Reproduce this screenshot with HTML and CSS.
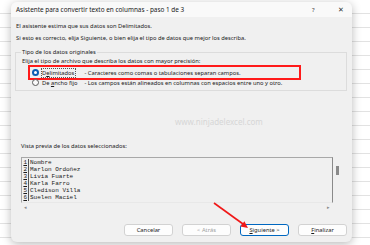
FILE: index.html
```html
<!DOCTYPE html>
<html lang="es">
<head>
    <meta charset="UTF-8">
    <title>Asistente para convertir texto en columnas</title>
    <link rel="stylesheet" href="styles.css">
</head>
<body>
    <div class="sheet">
        <div class="dialog">
            <div class="titlebar">
                <span class="title">Asistente para convertir texto en columnas - paso 1 de 3</span>
                <span class="tb-help">?</span>
                <span class="tb-close">✕</span>
            </div>

            <div class="dlg-body">
                <p class="line">El asistente estima que sus datos son Delimitados.</p>
                <p class="line">Si esto es correcto, elija Siguiente, o bien elija el tipo de datos que mejor los describa.</p>

                <fieldset class="group">
                    <legend>Tipo de los datos originales</legend>
                    <p class="hint">Elija el tipo de archivo que describa los datos con mayor precisión:</p>
                    <div class="opt opt-marked">
                        <span class="radio checked"></span>
                        <span class="opt-name"><span class="lbl focus">D<u>e</u>limitados</span></span>
                        <span class="opt-desc">- Caracteres como comas o tabulaciones separan campos.</span>
                    </div>
                    <div class="opt">
                        <span class="radio"></span>
                        <span class="opt-name"><span class="lbl">De <u>a</u>ncho fijo</span></span>
                        <span class="opt-desc">- Los campos están alineados en columnas con espacios entre uno y otro.</span>
                    </div>
                </fieldset>

                <div class="watermark">www.ninjadelexcel.com</div>

                <p class="line preview-label">Vista previa de los datos seleccionados:</p>

                <div class="preview-wrap">
                    <div class="preview" id="preview">
                        <!-- filas generadas abajo -->
                    </div>
                    <div class="vscroll"><span class="thumb"></span></div>
                </div>
                <div class="hscroll">
                    <span class="arr">&#9666;</span>
                    <span class="arr">&#9656;</span>
                </div>

                <div class="buttons">
                    <span class="btn">Cancelar</span>
                    <span class="btn disabled">&lt; Atrás</span>
                    <span class="btn default"><u>S</u>iguiente &gt;</span>
                    <span class="btn"><u>F</u>inalizar</span>
                </div>
            </div>
        </div>

        <svg class="arrow" width="370" height="245" viewBox="0 0 370 245">
            <line x1="214" y1="203" x2="243" y2="224" stroke="#f01818" stroke-width="1.6"/>
            <polygon points="248,228 240.4,226.4 244.4,221.2" fill="#f01818"/>
        </svg>
    </div>

    <script>
        const nombres = ['Nombre', 'Marlon Ordoñez', 'Livia Fuarte', 'Karla Farro', 'Cledison Villa', 'Suelen Maciel'];
        const preview = document.getElementById('preview');

        nombres.forEach((n, i) => {
            const row = document.createElement('div');
            row.className = 'prow';
            row.innerHTML = `<span class="pnum">${i + 1}</span><span class="ptext">${n}</span>`;
            preview.appendChild(row);
        });
    </script>
</body>
</html>
```

FILE: styles.css
```css
body {
    margin: 0;
    font-family: "Noto Sans", "Open Sans", sans-serif;
    color: #1a1a1a;
}

.sheet {
    position: relative;
    width: 370px;
    height: 245px;
    overflow: hidden;
    background-color: #ffffff;
    background-image: repeating-linear-gradient(to bottom, transparent 0, transparent 13px, #e2e2e2 13px, #e2e2e2 14px);
}

.dialog {
    margin: 2px 0 0 11px;
    width: 341px;
    height: 240px;
    border-radius: 6px;
    overflow: hidden;
    background: #f0f0f0;
    box-shadow: 0 2px 10px rgba(0, 0, 0, 0.28);
}

.titlebar {
    display: flex;
    align-items: center;
    height: 15px;
    padding-left: 5px;
    background: #f9f9f9;
    font-size: 6.4px;
}

.title {
    flex: 1;
}

.tb-help {
    width: 26px;
    font-size: 6px;
    color: #333;
}

.tb-close {
    width: 14px;
    font-size: 6.5px;
    color: #333;
}

.dlg-body {
    padding: 3px 5px 0 5px;
    font-size: 5.75px;
}

.line {
    margin: 0;
    line-height: 12px;
}

.group {
    box-sizing: border-box;
    width: 332px;
    margin: 4px 0 0 -1px;
    padding: 0 0 1px 5px;
    border: 1px solid #dcdcdc;
}

.group legend {
    padding: 0 1px;
    line-height: 8px;
}

.hint {
    margin: 0 0 0 1px;
    line-height: 10px;
}

.opt {
    display: flex;
    align-items: center;
    width: 267px;
    height: 9px;
    margin: -1px 0 0 7px;
    padding-left: 2px;
    border: 2px solid transparent;
}

.opt + .opt {
    margin-top: -4px;
}

.opt-marked {
    height: 11px;
    border-color: #ff1a1a;
}

.radio {
    box-sizing: border-box;
    flex: none;
    width: 7px;
    height: 7px;
    border-radius: 50%;
    border: 1px solid #5a5a5a;
    background: #fafafa;
}

.radio.checked {
    border: 2px solid #0a5fb4;
    background: #ffffff;
}

.opt-name {
    flex: none;
    width: 44px;
    margin-left: 1.5px;
    white-space: nowrap;
}

.lbl {
    display: inline-block;
    padding: 0 0.5px;
    line-height: 8px;
    border: 1px dotted transparent;
}

.lbl.focus {
    border-color: #555;
}

.opt-desc {
    white-space: nowrap;
}

.watermark {
    margin-top: 26px;
    padding-left: 159px;
    line-height: 10px;
    font-size: 8px;
    color: #d6d6d6;
}

.preview-label {
    margin-top: 13px;
    padding-left: 5px;
}

.preview-wrap {
    display: flex;
    margin: 5px 0 0 5px;
}

.preview {
    box-sizing: border-box;
    width: 312px;
    height: 46px;
    padding-top: 1px;
    border: 1px solid #a8a8a8;
    border-right-color: #8a8a8a;
    border-bottom-color: #e8e8e8;
    font-family: "Liberation Mono", monospace;
    font-size: 6px;
}

.prow {
    display: flex;
    line-height: 7px;
}

.pnum {
    box-sizing: border-box;
    width: 7px;
    text-align: right;
    padding-right: 1px;
    text-decoration: underline;
    border-right: 1px solid #555;
}

.ptext {
    padding-left: 1px;
}

.vscroll {
    padding: 9px 0 0 3px;
}

.thumb {
    display: block;
    width: 3px;
    height: 9px;
    background: #8a8a8a;
}

.hscroll {
    display: flex;
    justify-content: space-between;
    width: 306px;
    margin-left: 8px;
    line-height: 9px;
    font-size: 5px;
    color: #8a8a8a;
}

.buttons {
    display: flex;
    justify-content: flex-end;
    gap: 9px;
    margin-top: 12px;
}

.btn {
    box-sizing: border-box;
    width: 49px;
    height: 12px;
    line-height: 10px;
    text-align: center;
    background: #fdfdfd;
    border: 1px solid #d2d2d2;
    border-radius: 3px;
}

.btn.disabled {
    color: #a0a0a0;
}

.btn.default {
    border-color: #0067c0;
}

.arrow {
    position: absolute;
    left: 0;
    top: 0;
    pointer-events: none;
}
```
